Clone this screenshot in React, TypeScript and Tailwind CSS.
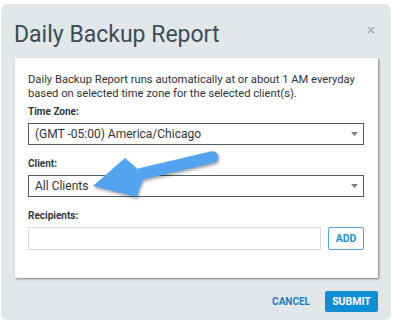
import React from 'react';

function Caret() {
  return (
    <svg width="7" height="4" viewBox="0 0 7 4" className="shrink-0">
      <path d="M0 0h7L3.5 4z" fill="#7a7f83" />
    </svg>
  );
}

function Select({ value }: { value: string }) {
  return (
    <div className="flex h-[22px] items-center justify-between border border-[#505c63] bg-white pl-[6px] pr-[5px]">
      <span className="text-[12px] leading-none text-[#2f3336]">{value}</span>
      <Caret />
    </div>
  );
}

function Label({ children }: { children: React.ReactNode }) {
  return <div className="mb-[5px] text-[10px] font-bold leading-[12px] text-[#2e3a40]">{children}</div>;
}

export default function App() {
  return (
    <div className="relative h-[326px] w-[394px] bg-white pl-[1px] pt-[4px]" style={{ fontFamily: 'Roboto, "Liberation Sans", sans-serif' }}>
      <div className="relative h-[316px] w-[390px] rounded-[6px] bg-[#e2e7ea]">
        <div className="flex items-start justify-between pl-[13px] pr-[16px] pt-[17px]">
          <h1 className="text-[23px] font-normal leading-[28px] text-[#3b4d56]">Daily Backup Report</h1>
          <svg width="8" height="8" viewBox="0 0 8 8" className="mt-[5px]">
            <path d="M1 1l6 6M7 1L1 7" stroke="#a3a8ab" strokeWidth="1.4" />
          </svg>
        </div>

        <div className="ml-[14px] mt-[9px] h-[220px] w-[363px] bg-white pl-[13px] pr-[14px] pt-[15px] shadow-[1px_1px_2px_rgba(0,0,0,0.45)]">
          <p className="whitespace-nowrap text-[11.2px] leading-[13.5px] text-[#2f3336]">
            Daily Backup Report runs automatically at or about 1 AM everyday
            <br />
            based on selected time zone for the selected client(s).
          </p>

          <div className="mt-[6px]">
            <Label>Time Zone:</Label>
            <Select value="(GMT -05:00) America/Chicago" />
          </div>

          <div className="mt-[13px]">
            <Label>Client:</Label>
            <Select value="All Clients" />
          </div>

          <div className="mt-[13px]">
            <Label>Recipients:</Label>
            <div className="flex gap-[7px]">
              <div className="h-[23px] w-[293px] border border-[#d6dbde] bg-white" />
              <button className="flex h-[23px] w-[36px] items-center justify-center rounded-[2px] border border-[#4ea6dc] bg-white text-[10.5px] font-bold text-[#1b8fd2]">
                ADD
              </button>
            </div>
          </div>
        </div>

        <div className="mr-[13px] mt-[13px] flex items-center justify-end gap-[15px]">
          <span className="text-[10px] font-bold text-[#1f7fbf]">CANCEL</span>
          <button className="flex h-[21px] w-[53px] items-center justify-center rounded-[2px] bg-[#0e8fd3] text-[10.5px] font-bold text-white">
            SUBMIT
          </button>
        </div>
      </div>

      <svg
        className="pointer-events-none absolute left-0 top-0"
        width="394"
        height="326"
        viewBox="0 0 394 326"
        style={{ filter: 'drop-shadow(1px 2px 1.5px rgba(0,0,0,0.35))' }}
      >
        <path
          d="M93 186 L125 158 Q132 164 137 168.8 L211.6 151.2 A6 6 0 0 1 214.4 162.8 L143 179.6 Q139 188 137 197 Z"
          fill="#52a3f0"
        />
      </svg>
    </div>
  );
}
